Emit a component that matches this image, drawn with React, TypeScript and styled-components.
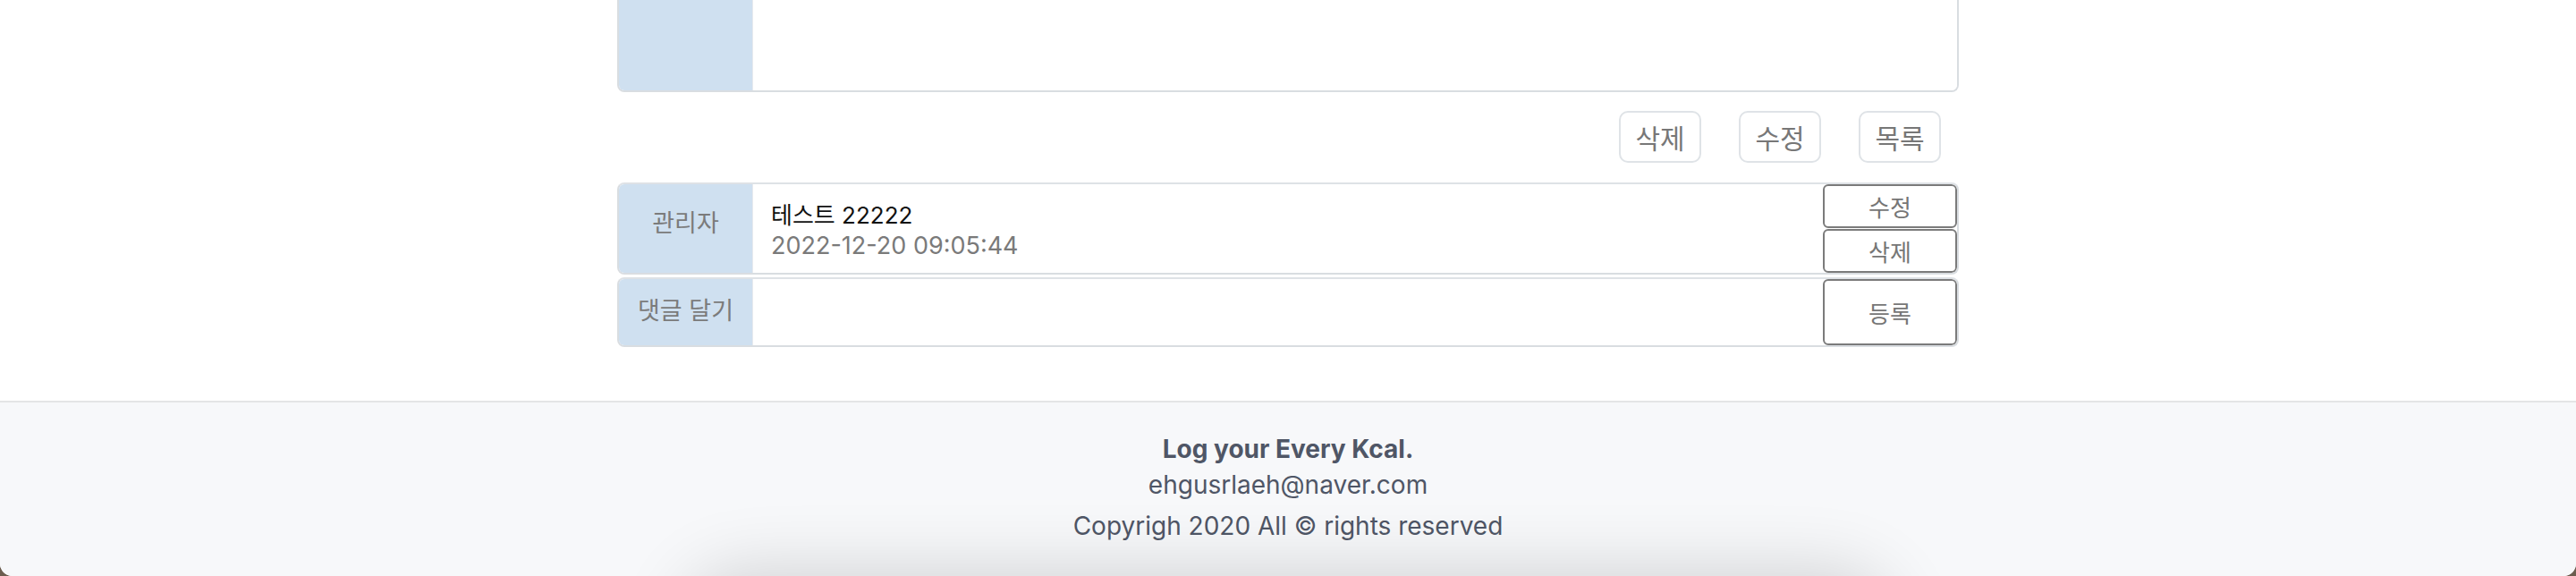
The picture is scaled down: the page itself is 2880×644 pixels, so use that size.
import React from 'react';
import styled, { createGlobalStyle } from 'styled-components';

const GlobalStyle = createGlobalStyle`
    html, body {
        margin:0;
        padding:0;
        background:#6b5d4f;
    }
    body {
        font-family:"Inter", "Noto Sans CJK KR", sans-serif;
    }
    * { box-sizing:border-box; }
`;

const Page = styled.div`
    display:flex;
    flex-direction:column;
    min-height:100vh;
    background:#fff;
    border-radius:0 0 14px 14px;
    overflow:hidden;
`;

const Board = styled.div`
    width:1500px;
    margin:0 auto 60px;
`;

const Row = styled.div<{ $cut?: boolean; $height: number }>`
    display:flex;
    height:${p => p.$height}px;
    border:2px solid #d9dde1;
    border-top:${p => (p.$cut ? 'none' : '2px solid #dee2e6')};
    border-radius:${p => (p.$cut ? '0 0 8px 8px' : '8px')};
    overflow:hidden;
    & + & { margin-top:3px; }
`;

const Label = styled.div<{ $lift?: number }>`
    flex:0 0 149px;
    display:flex;
    align-items:center;
    justify-content:center;
    padding-bottom:${p => p.$lift ?? 8}px;
    background:#cfe0f0;
    color:#7b7b7b;
    font-size:27px;
`;

const Cell = styled.div`
    flex:1;
    display:flex;
    flex-direction:column;
    justify-content:center;
    padding:4px 20px 0;
    background:#fff;
    border-left:1px solid #e6eaee;
`;

const Title = styled.div`
    color:#111;
    font-size:26px;
    line-height:34px;
`;

const Date = styled.div`
    color:#7a7a7a;
    font-size:27px;
    line-height:34px;
`;

const SideButtons = styled.div`
    flex:0 0 150px;
    display:flex;
    flex-direction:column;
    gap:1px;
`;

const OutlineButton = styled.button`
    flex:1;
    border:2px solid #7b7b7b;
    border-radius:6px;
    background:#fff;
    color:#767676;
    font-family:inherit;
    font-size:26px;
    padding:0;
    cursor:pointer;
`;

const Toolbar = styled.div`
    display:flex;
    justify-content:flex-end;
    gap:42px;
    padding-right:20px;
    margin:21px 0 22px;
`;

const LightButton = styled.button`
    width:92px;
    height:58px;
    border:2px solid #dfe3e7;
    border-radius:10px;
    background:#fff;
    color:#777;
    font-family:inherit;
    font-size:30px;
    padding:0;
    cursor:pointer;
`;

const Footer = styled.footer`
    flex:1;
    position:relative;
    overflow:hidden;
    border-top:2px solid #e4e5e6;
    background:#f7f8fa;
    padding-top:32px;
    text-align:center;
    color:#4f5666;
    font-size:28px;
`;

const Slogan = styled.p`
    margin:0;
    line-height:40px;
    font-weight:700;
`;

const Mail = styled.p`
    margin:0;
    line-height:40px;
`;

const Copy = styled.p`
    margin:6px 0 0;
    line-height:40px;
`;

// 화면 아래쪽에 걸쳐 있는 떠 있는 요소의 그림자
const FloatShadow = styled.div`
    position:absolute;
    left:50%;
    top:214px;
    width:1300px;
    height:120px;
    margin-left:-650px;
    border-radius:40px;
    box-shadow:0 0 80px 24px rgba(0,0,0,0.16);
`;

const App = () => {
    return (
        <Page>
            <GlobalStyle />
            <Board>
                <Row $cut $height={103}>
                    <Label />
                    <Cell />
                </Row>
                <Toolbar>
                    <LightButton>삭제</LightButton>
                    <LightButton>수정</LightButton>
                    <LightButton>목록</LightButton>
                </Toolbar>
                <Row $height={103}>
                    <Label $lift={16}>관리자</Label>
                    <Cell>
                        <Title>테스트 22222</Title>
                        <Date>2022-12-20 09:05:44</Date>
                    </Cell>
                    <SideButtons>
                        <OutlineButton>수정</OutlineButton>
                        <OutlineButton>삭제</OutlineButton>
                    </SideButtons>
                </Row>
                <Row $height={78}>
                    <Label $lift={8}>댓글 달기</Label>
                    <Cell />
                    <SideButtons>
                        <OutlineButton>등록</OutlineButton>
                    </SideButtons>
                </Row>
            </Board>
            <Footer>
                <Slogan>Log your Every Kcal.</Slogan>
                <Mail>ehgusrlaeh@naver.com</Mail>
                <Copy>Copyrigh 2020 All © rights reserved</Copy>
                <FloatShadow />
            </Footer>
        </Page>
    );
};

export default App;
